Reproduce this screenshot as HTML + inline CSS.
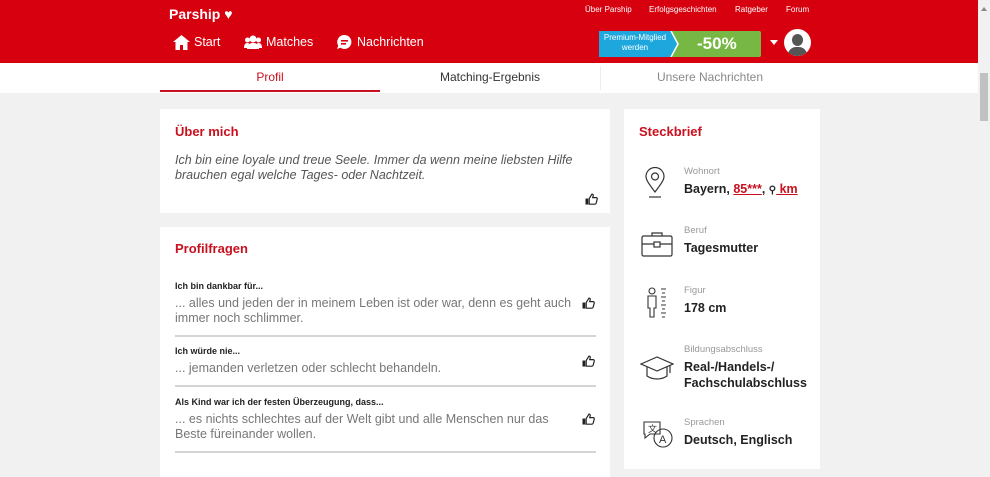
<!DOCTYPE html>
<html><head><meta charset="utf-8"><style>
*{margin:0;padding:0;box-sizing:border-box}
body{width:990px;height:465px;overflow:hidden;background:#f1f1f1;font-family:"Liberation Sans",sans-serif;position:relative}
.a{position:absolute;white-space:nowrap}
.hdr{position:absolute;left:0;top:0;width:978px;height:63px;background:#d7000f}
.w{color:#fff}
.card{position:absolute;background:#fff}
.ttl{color:#c8101e;font-weight:bold;font-size:13px}
.q{font-size:9px;font-weight:bold;color:#222}
.ans{font-size:12.5px;color:#777;line-height:15px;white-space:normal}
.sep{position:absolute;left:15px;width:421px;height:2px;background:#d4d4d4}
.lab{font-size:9.5px;color:#999}
.val{font-size:12.5px;font-weight:bold;color:#222;line-height:16px}
</style></head><body>
<svg width="0" height="0" style="position:absolute"><defs><symbol id="th" viewBox="0 0 14 13"><g fill="none" stroke="#222" stroke-width="1.3"><path d="M4.5 6L7.5 1.2c1.2 0 1.6.8 1.3 2L8.3 5h3.7c.9 0 1.4.8 1.2 1.6l-1.2 4.6c-.2.6-.7.9-1.3.9H4.5z"/></g><rect x="0.5" y="6" width="3" height="6.5" fill="#222"/></symbol></defs></svg>
<div class="hdr"></div>
<div class="a w" style="left:169px;top:6px;font-size:14px;font-weight:bold">Parship ♥</div>
<div class="a w" style="left:585px;top:5px;font-size:8px">Über Parship</div>
<div class="a w" style="left:649px;top:5px;font-size:8px">Erfolgsgeschichten</div>
<div class="a w" style="left:735px;top:5px;font-size:8px">Ratgeber</div>
<div class="a w" style="left:786px;top:5px;font-size:8px">Forum</div>
<svg class="a" style="left:173px;top:35px" width="17" height="15" viewBox="0 0 17 15"><path d="M8.5 0L0 7h2.5v8h4.5v-5h3v5h4.5V7H17z" fill="#fff"/></svg>
<div class="a w" style="left:194px;top:35px;font-size:12.5px">Start</div>
<svg class="a" style="left:244px;top:35px" width="18" height="14" viewBox="0 0 18 14"><circle cx="9" cy="4" r="3.5" fill="#fff"/><path d="M3 14c0-5 3-6 6-6s6 1 6 6z" fill="#fff"/><circle cx="3.5" cy="5" r="2.5" fill="#fff"/><circle cx="14.5" cy="5" r="2.5" fill="#fff"/><path d="M0 13c0-3 1-5 3.5-5 1 0 1.5 .5 1.5.5L3 13zM18 13c0-3-1-5-3.5-5-1 0-1.5 .5-1.5.5L15 13z" fill="#fff"/></svg>
<div class="a w" style="left:266px;top:35px;font-size:12.5px">Matches</div>
<svg class="a" style="left:337px;top:35px" width="15" height="15" viewBox="0 0 15 15"><path d="M7.5 0a7 7 0 1 1-4 12.8L0 14l1.3-3.3A7 7 0 0 1 7.5 0z" fill="#fff"/><rect x="4" y="5" width="7" height="1.6" fill="#d7000f"/><rect x="4" y="8" width="5" height="1.6" fill="#d7000f"/></svg>
<div class="a w" style="left:357px;top:35px;font-size:12.5px">Nachrichten</div>
<div class="a" style="left:599px;top:31px;width:162px;height:26px;background:#76b843;border-radius:2px"></div>
<svg class="a" style="left:599px;top:31px" width="80" height="26"><path d="M0 0h72l7 13-7 13H0z" fill="#1ea7dd"/><path d="M72 0l7 13-7 13" stroke="#fff" stroke-width="1.5" fill="none"/></svg>
<div class="a w" style="left:599px;top:33px;width:72px;text-align:center;font-size:8px;line-height:10px;white-space:normal">Premium-Mitglied werden</div>
<div class="a w" style="left:697px;top:34px;font-size:17px;font-weight:bold">-50%</div>
<div class="a" style="left:770px;top:40px;border:4px solid transparent;border-top:5px solid #fff"></div>
<div class="a" style="left:784px;top:29px;width:27px;height:27px;border-radius:50%;background:#fff;overflow:hidden"><div class="a" style="left:8px;top:5px;width:11px;height:12px;border-radius:50%;background:#555"></div><div class="a" style="left:4px;top:18px;width:19px;height:12px;border-radius:8px 8px 0 0;background:#555"></div></div>
<div class="a" style="left:0;top:63px;width:978px;height:30px;background:#fff"></div>
<div class="a" style="left:160px;top:70px;width:220px;text-align:center;color:#c8101e;font-size:12px">Profil</div>
<div class="a" style="left:160px;top:90px;width:220px;height:2px;background:#c8101e"></div>
<div class="a" style="left:380px;top:70px;width:220px;text-align:center;color:#333;font-size:12px">Matching-Ergebnis</div>
<div class="a" style="left:600px;top:66px;width:1px;height:24px;background:#eee"></div>
<div class="a" style="left:600px;top:70px;width:220px;text-align:center;color:#888;font-size:12px">Unsere Nachrichten</div>
<div class="a" style="left:978px;top:0;width:12px;height:465px;background:#f1f1f1"></div>
<div class="a" style="left:981px;top:4px;border:3px solid transparent;border-bottom:4px solid #888"></div>
<div class="a" style="left:980px;top:73px;width:8px;height:48px;background:#c1c1c1"></div>
<div class="card" style="left:160px;top:109px;width:450px;height:104px">
 <div class="a ttl" style="left:15px;top:15px">Über mich</div>
 <div class="a ans" style="left:15px;top:44px;width:420px;font-style:italic;color:#555">Ich bin eine loyale und treue Seele. Immer da wenn meine liebsten Hilfe brauchen egal welche Tages- oder Nachtzeit.</div>
 <svg class="a" style="left:425px;top:84px" width="13" height="12"><use href="#th"/></svg>
</div>
<div class="card" style="left:160px;top:227px;width:450px;height:250px">
 <div class="a ttl" style="left:15px;top:14px">Profilfragen</div>
 <div class="a q" style="left:15px;top:54px">Ich bin dankbar für...</div>
 <div class="a ans" style="left:15px;top:69px;width:400px">... alles und jeden der in meinem Leben ist oder war, denn es geht auch immer noch schlimmer.</div>
 <div class="sep" style="top:108px"></div>
 <div class="a q" style="left:15px;top:119px">Ich würde nie...</div>
 <div class="a ans" style="left:15px;top:134px;width:400px">... jemanden verletzen oder schlecht behandeln.</div>
 <div class="sep" style="top:158px"></div>
 <div class="a q" style="left:15px;top:170px">Als Kind war ich der festen Überzeugung, dass...</div>
 <div class="a ans" style="left:15px;top:185px;width:400px">... es nichts schlechtes auf der Welt gibt und alle Menschen nur das Beste füreinander wollen.</div>
 <div class="sep" style="top:224px"></div>
 <svg class="a" style="left:422px;top:70px" width="13" height="12"><use href="#th"/></svg>
 <svg class="a" style="left:422px;top:128px" width="13" height="12"><use href="#th"/></svg>
 <svg class="a" style="left:422px;top:186px" width="13" height="12"><use href="#th"/></svg>
</div>
<div class="card" style="left:624px;top:109px;width:196px;height:360px">
 <div class="a ttl" style="left:15px;top:15px">Steckbrief</div>
 <svg class="a" style="left:20px;top:58px" width="22" height="32" viewBox="0 0 22 32" fill="none" stroke="#333" stroke-width="1.2"><path d="M11 25C5 17 2 13 2 9.5a9 9 0 0 1 18 0C20 13 17 17 11 25z"/><circle cx="11" cy="9.5" r="3.5"/><path d="M5 30h12"/></svg>
 <div class="a lab" style="left:60px;top:57px">Wohnort</div>
 <div class="a val" style="left:60px;top:72px">Bayern, <span style="color:#c8101e;text-decoration:underline">85***</span>, <span style="font-size:10px">⚲</span><span style="color:#c8101e;text-decoration:underline"> km</span></div>
 <svg class="a" style="left:17px;top:121px" width="32" height="27" viewBox="0 0 32 27" fill="none" stroke="#333" stroke-width="1.2"><rect x="1" y="6" width="30" height="20" rx="1.5"/><path d="M11 6V3h10v3M1 14h30"/><rect x="13" y="12" width="6" height="5" fill="#fff"/></svg>
 <div class="a lab" style="left:60px;top:116px">Beruf</div>
 <div class="a val" style="left:60px;top:131px">Tagesmutter</div>
 <svg class="a" style="left:22px;top:178px" width="24" height="32" viewBox="0 0 24 32" fill="none" stroke="#333" stroke-width="1.1"><circle cx="6" cy="4" r="3"/><path d="M2 9h8v12H8v9H4v-9H2z"/><path d="M15 2h5M16 6h3M15 10h5M16 14h3M15 18h5M16 22h3M15 26h5M16 30h3"/></svg>
 <div class="a lab" style="left:60px;top:176px">Figur</div>
 <div class="a val" style="left:60px;top:191px">178 cm</div>
 <svg class="a" style="left:16px;top:246px" width="34" height="26" viewBox="0 0 34 26" fill="none" stroke="#333" stroke-width="1.2"><path d="M1 9L17 2l16 7-16 7z"/><path d="M7 12v9c6 4 14 4 20 0v-9"/><path d="M30 10v8"/></svg>
 <div class="a lab" style="left:60px;top:235px">Bildungsabschluss</div>
 <div class="a val" style="left:60px;top:250px">Real-/Handels-/<br>Fachschulabschluss</div>
 <svg class="a" style="left:17px;top:311px" width="34" height="30" viewBox="0 0 34 30" fill="none" stroke="#333" stroke-width="1.1"><path d="M3 2h16v12H9l-5 4v-4H3z"/><circle cx="22" cy="18" r="9"/><text x="18" y="23" font-size="11" font-family="Liberation Sans" fill="#333" stroke="none">A</text><text x="7" y="12" font-size="9" fill="#333" stroke="none">文</text></svg>
 <div class="a lab" style="left:60px;top:308px">Sprachen</div>
 <div class="a val" style="left:60px;top:323px">Deutsch, Englisch</div>
</div>
</body></html>
